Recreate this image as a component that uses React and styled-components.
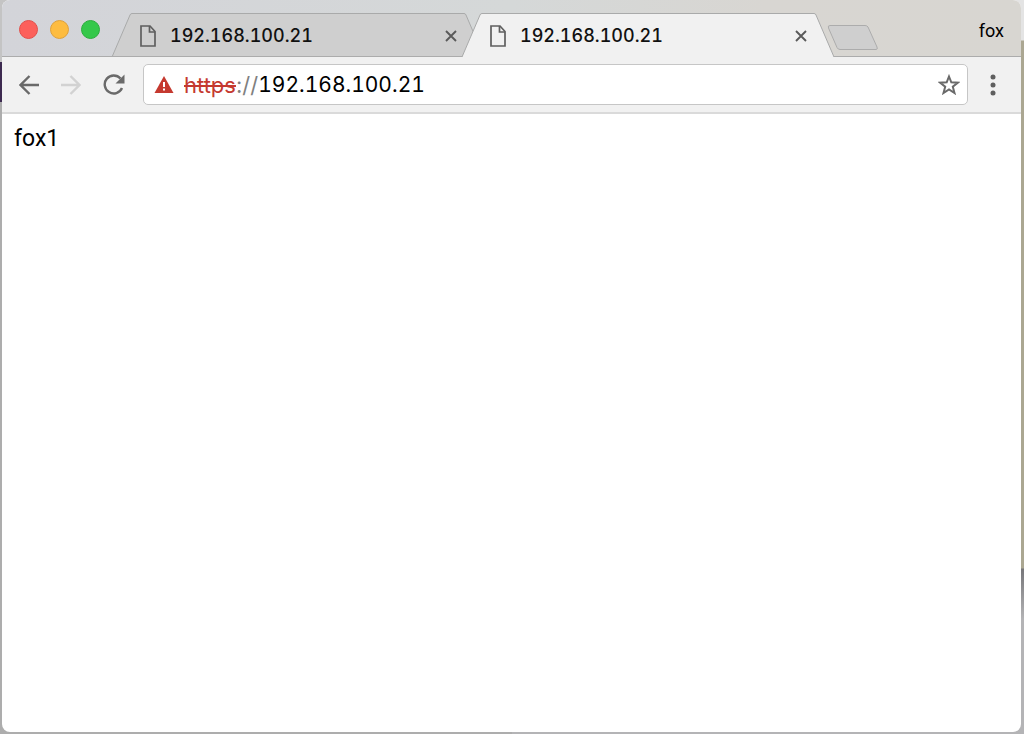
import React, { useState } from "react";
import styled, { createGlobalStyle } from "styled-components";

const TABS = [
    { id: 1, title: "192.168.100.21" },
    { id: 2, title: "192.168.100.21" },
];

const PageIcon = () => (
    <svg width="16" height="22" viewBox="0 0 16 22" fill="none">
        <path d="M1 1H10L15 6.500V21H1Z" stroke="#5f5f5f" strokeWidth="1.700" />
        <path d="M9.500 1V7H15" stroke="#5f5f5f" strokeWidth="1.700" />
    </svg>
);

const CloseIcon = () => (
    <svg width="12" height="12" viewBox="0 0 12 12">
        <path d="M1 1L11 11M11 1L1 11" stroke="#5a5a5a" strokeWidth="1.900" />
    </svg>
);

const BackIcon = () => (
    <svg width="20" height="20" viewBox="0 0 20 20" fill="none">
        <path d="M20 10H2M10.500 1L1.500 10L10.500 19" stroke="currentColor" strokeWidth="2.400" />
    </svg>
);

const ForwardIcon = () => (
    <svg width="20" height="20" viewBox="0 0 20 20" fill="none">
        <path d="M0 10H18M9.500 1L18.500 10L9.500 19" stroke="currentColor" strokeWidth="2.400" />
    </svg>
);

const ReloadIcon = () => (
    <svg width="22" height="22" viewBox="0 0 22 22" fill="none">
        <path d="M17.500 4.500A9 9 0 1 0 19 14" stroke="currentColor" strokeWidth="2.400" />
        <path d="M21.500 0.500V9.500H12.500Z" fill="currentColor" />
    </svg>
);

const WarningIcon = () => (
    <svg width="20" height="17" viewBox="0 0 20 17">
        <path d="M10 0L19.500 17H0.500Z" fill="#c5392f" />
        <path d="M9 6H11V11H9ZM9 12.500H11V14.500H9Z" fill="#fff" />
    </svg>
);

const StarIcon = () => (
    <svg width="22" height="22" viewBox="0 0 22 22" fill="none">
        <path
            d="M11 2.500L13.300 8.300L19.800 8.700L14.800 12.700L16.500 19L11 15.500L5.500 19L7.200 12.700L2.200 8.700L8.700 8.300Z"
            stroke="#6a6a6a"
            strokeWidth="2"
        />
    </svg>
);

const MenuIcon = () => (
    <svg width="6" height="22" viewBox="0 0 6 22" fill="#5f5f5f">
        <circle cx="3" cy="3" r="2.500" />
        <circle cx="3" cy="11" r="2.500" />
        <circle cx="3" cy="19" r="2.500" />
    </svg>
);

const LeftSlope = ({ fill }) => (
    <svg width="20" height="44" viewBox="0 0 20 44">
        <path d="M0 44L18 2Q18.500 0.500 20 0.500V44Z" fill={fill} />
        <path d="M0 44L18 2Q18.500 0.500 20 0.500" fill="none" stroke="#a9aaaa" />
    </svg>
);

const RightSlope = ({ fill }) => (
    <svg width="20" height="44" viewBox="0 0 20 44">
        <path d="M20 44L2 2Q1.500 0.500 0 0.500V44Z" fill={fill} />
        <path d="M20 44L2 2Q1.500 0.500 0 0.500" fill="none" stroke="#a9aaaa" />
    </svg>
);

const App = () => {
    const [activeId, setActiveId] = useState(2);
    const [address, setAddress] = useState("192.168.100.21");

    return (
        <Desktop>
            <GlobalStyle />
            <Window>
                <TabStrip>
                    <Lights>
                        <Light type="button" aria-label="Close" $color="#fc605b" $edge="#e24f4a" />
                        <Light type="button" aria-label="Minimize" $color="#fdbc40" $edge="#dfa13a" />
                        <Light type="button" aria-label="Zoom" $color="#34c84a" $edge="#2bad3c" />
                    </Lights>
                    <Tabs>
                        {TABS.map((tab) => {
                            const active = tab.id === activeId;
                            const fill = active ? "#f1f1f1" : "#cfcfcf";
                            return (
                                <Tab key={tab.id} $active={active}>
                                    <LeftSlope fill={fill} />
                                    <TabBody $fill={fill}>
                                        <TabButton type="button" onClick={() => setActiveId(tab.id)}>
                                            <PageIcon />
                                            {tab.title}
                                        </TabButton>
                                        <IconButton type="button" aria-label="Close tab">
                                            <CloseIcon />
                                        </IconButton>
                                    </TabBody>
                                    <RightSlope fill={fill} />
                                </Tab>
                            );
                        })}
                        <NewTab type="button" aria-label="New tab">
                            <svg width="52" height="26" viewBox="0 0 52 26">
                                <path
                                    d="M3 0.500H38Q40 0.500 41 2L50 22Q51 24.500 49 24.500H13Q11 24.500 10 22.500L1.500 3Q0.500 0.500 3 0.500Z"
                                    fill="#cfcfcf"
                                    stroke="#acacac"
                                />
                            </svg>
                        </NewTab>
                    </Tabs>
                    <Profile type="button">fox</Profile>
                </TabStrip>
                <Toolbar>
                    <Nav>
                        <IconButton type="button" aria-label="Back">
                            <BackIcon />
                        </IconButton>
                        <IconButton type="button" aria-label="Forward" disabled>
                            <ForwardIcon />
                        </IconButton>
                        <IconButton type="button" aria-label="Reload">
                            <ReloadIcon />
                        </IconButton>
                    </Nav>
                    <AddressBar>
                        <WarningIcon />
                        <Scheme htmlFor="address">
                            <s>https</s>://
                        </Scheme>
                        <AddressInput
                            id="address"
                            type="text"
                            value={address}
                            onChange={(e) => setAddress(e.target.value)}
                        />
                        <IconButton type="button" aria-label="Bookmark">
                            <StarIcon />
                        </IconButton>
                    </AddressBar>
                    <IconButton type="button" aria-label="Menu">
                        <MenuIcon />
                    </IconButton>
                </Toolbar>
                <Content>fox1</Content>
            </Window>
        </Desktop>
    );
};

export default App;

const GlobalStyle = createGlobalStyle`
    * {
        box-sizing: border-box;
    }

    body {
        margin: 0;
        font-family: Inter, "Liberation Sans", sans-serif;
    }

    button,
    input {
        margin: 0;
        padding: 0;
        border: none;
        background: none;
        font-family: inherit;
    }

    svg {
        display: block;
        flex: none;
    }
`;

const Desktop = styled.div`
    display: flex;
    min-height: 100vh;
    padding: 0 3px 2px 2px;
    background:
        linear-gradient(#e4e4e4 0 40px, #aba792 41px 568px, #77777a 569px, #b4b4b6 620px) right / 50% 100% no-repeat,
        linear-gradient(#c4c4c4 0 62px, #3d2a50 62px 102px, #adadad 102px);
`;

const Window = styled.div`
    flex: 1;
    min-width: 0;
    display: flex;
    flex-direction: column;
    overflow: hidden;
    border-radius: 8px;
    background-color: #fff;
`;

const TabStrip = styled.div`
    display: flex;
    align-items: flex-end;
    height: 57px;
    padding-right: 17px;
    background: linear-gradient(90deg, #d3d4d9, #d5d8d8 50%, #d8d6d2 75%, #d8d6d1);
    box-shadow: inset 0 -1px #acacac;
`;

const Lights = styled.div`
    display: flex;
    gap: 12px;
    align-self: flex-start;
    padding: 20px 12px 0 17px;
`;

const Light = styled.button`
    width: 19px;
    height: 19px;
    border: 1px solid ${(props) => props.$edge};
    border-radius: 50%;
    background-color: ${(props) => props.$color};
`;

const Tabs = styled.div`
    flex: 1;
    min-width: 0;
    display: flex;
    align-items: flex-start;
`;

const Tab = styled.div`
    position: relative;
    z-index: ${(props) => (props.$active ? 1 : 0)};
    flex: 0 1 372px;
    min-width: 0;
    display: flex;
    height: ${(props) => (props.$active ? "44px" : "43px")};
    overflow: hidden;

    & + & {
        margin-left: -22px;
    }
`;

const TabBody = styled.div`
    flex: 1;
    min-width: 0;
    display: flex;
    align-items: flex-start;
    padding: 10px 7px 0 8px;
    border-top: 1px solid #a9aaaa;
    background-color: ${(props) => props.$fill};
`;

const TabButton = styled.button`
    flex: 1;
    min-width: 0;
    display: flex;
    align-items: center;
    gap: 14px;
    overflow: hidden;
    font-size: 18px;
    font-weight: 500;
    line-height: 24px;
    font-variant-numeric: tabular-nums;
    color: #111;

    & + button {
        padding: 6px 0;
    }
`;

const NewTab = styled.button`
    margin: 12px 0 0 -7px;
`;

const Profile = styled.button`
    align-self: center;
    padding-top: 4px;
    font-family: Roboto, "Liberation Sans", sans-serif;
    font-size: 18px;
    line-height: 24px;
    color: #000;
`;

const IconButton = styled.button`
    flex: none;
    color: ${(props) => (props.disabled ? "#d2d2d2" : "#6a6a6a")};
`;

const Toolbar = styled.div`
    display: flex;
    align-items: center;
    gap: 22px;
    height: 57px;
    padding: 0 25px 0 17px;
    border-bottom: 2px solid #dadada;
    background-color: #f1f1f1;
`;

const Nav = styled.div`
    display: flex;
    align-items: center;
    gap: 22px;
    margin-right: -4px;
`;

const AddressBar = styled.div`
    flex: 1;
    min-width: 0;
    display: flex;
    align-items: center;
    height: 41px;
    padding: 0 7px 0 10px;
    border: 1px solid #c6c6c6;
    border-radius: 5px;
    background-color: #fff;
`;

const Scheme = styled.label`
    margin-left: 10px;
    font-size: 22px;
    line-height: 28px;
    color: #808080;

    s {
        color: #c5392f;
    }
`;

const AddressInput = styled.input`
    flex: 1;
    min-width: 0;
    height: 28px;
    font-size: 21px;
    line-height: 28px;
    font-variant-numeric: tabular-nums;
    color: #000;
    outline: none;
`;

const Content = styled.main`
    flex: 1;
    padding: 9px 12px;
    font-family: Roboto, "Liberation Sans", sans-serif;
    font-size: 23px;
    line-height: 32px;
    color: #000;
`;
